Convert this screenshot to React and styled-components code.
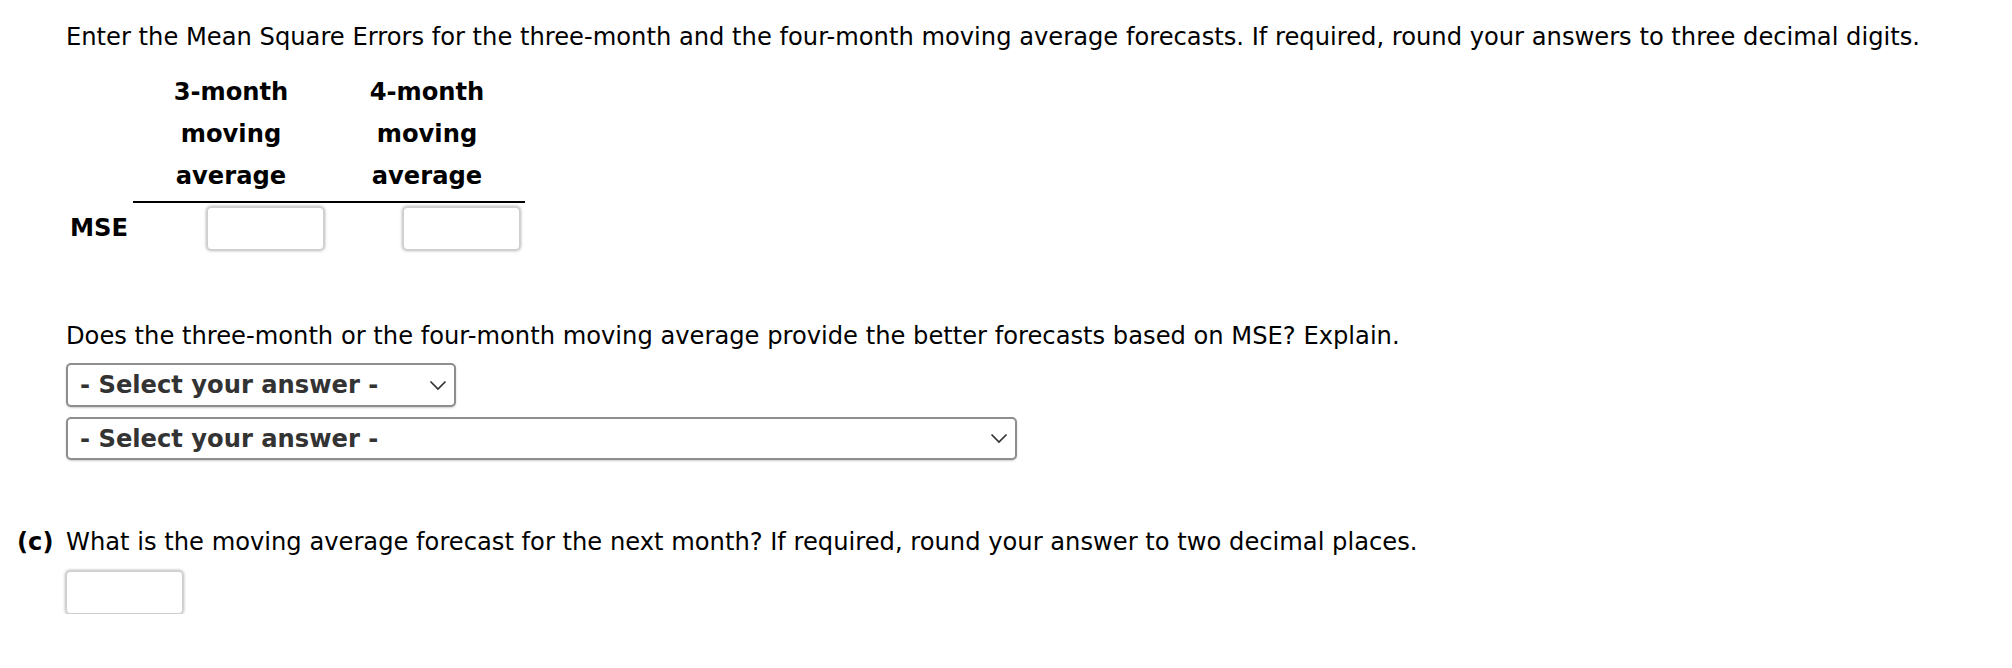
import React from 'react';
import styled, { createGlobalStyle } from 'styled-components';

const GlobalStyle = createGlobalStyle`
    body {
        margin: 0;
        background: #fff;
        color: #000;
        font-family: "DejaVu Sans", Verdana, sans-serif;
        font-size: 24.2px;
        line-height: 42px;
    }
`

const Page = styled.div`
    padding-top: 16px;
    width: 2012px;
`

const Part = styled.div`
    display: grid;
    grid-template-columns: 66px 1fr;
    margin-top: ${props => props.top || 0}px;
`

const PartLabel = styled.span`
    font-weight: bold;
    padding-left: 17px;
`

const Content = styled.div`
    display: flex;
    flex-direction: column;
    align-items: flex-start;
`

const Text = styled.p`
    margin: 0;
`

const Table = styled.table`
    border-collapse: collapse;
    table-layout: fixed;
    width: 459px;
    margin: 13px 0 0 66px;
`

const HeadCell = styled.th`
    width: 196px;
    padding: 0 0 4px;
    text-align: center;
    font-weight: bold;
    border-bottom: 2px solid #000;
    vertical-align: bottom;
`

const EmptyHead = styled.th`
    width: 67px;
    padding: 0;
`

const RowLabel = styled.th`
    text-align: left;
    padding: 4px 0 6px 4px;
    font-weight: bold;
`

const Cell = styled.td`
    padding: 4px 0 6px ${props => props.indent}px;
`

const NumberInput = styled.input`
    display: block;
    box-sizing: border-box;
    width: 117px;
    height: 43px;
    border: 1px solid #cfcfcf;
    border-radius: 4px;
    box-shadow: 0 0 3px 1px rgba(0, 0, 0, 0.28);
    background: #fff;
    margin: ${props => props.top || 0}px 0 0;
`

const SelectBox = styled.div`
    box-sizing: border-box;
    width: ${props => props.width}px;
    height: ${props => props.height}px;
    margin-top: ${props => props.top}px;
    border: 2px solid #8e8e8e;
    border-radius: 5px;
    box-shadow: 0 1px 2px rgba(0, 0, 0, 0.2);
    display: flex;
    align-items: center;
    justify-content: space-between;
    padding: 0 7px 0 12px;
    font-weight: bold;
    color: #333;
    background: #fff;
`

const Chevron = () => (
    <svg width="18" height="11" viewBox="0 0 18 11">
        <path d="M1.5 1.5 L9 9 L16.5 1.5" fill="none" stroke="#333" strokeWidth="1.7" />
    </svg>
)

const Select = ({width, height, top}) => (
    <SelectBox width={width} height={height} top={top}>
        <span>- Select your answer -</span>
        <Chevron/>
    </SelectBox>
)

const App = () => {
    return (
        <Page>
            <GlobalStyle/>
            <Part>
                <span/>
                <Content>
                    <Text>Enter the Mean Square Errors for the three-month and the four-month moving average forecasts. If required, round your answers to three decimal digits.</Text>
                </Content>
            </Part>
            <Table>
                <thead>
                    <tr>
                        <EmptyHead/>
                        <HeadCell>3-month<br/>moving<br/>average</HeadCell>
                        <HeadCell>4-month<br/>moving<br/>average</HeadCell>
                    </tr>
                </thead>
                <tbody>
                    <tr>
                        <RowLabel>MSE</RowLabel>
                        <Cell indent={74}><NumberInput type="text"/></Cell>
                        <Cell indent={74}><NumberInput type="text"/></Cell>
                    </tr>
                </tbody>
            </Table>

            <Part top={59}>
                <span/>
                <Content>
                    <Text>Does the three-month or the four-month moving average provide the better forecasts based on MSE? Explain.</Text>
                    <Select width={390} height={44} top={6}/>
                    <Select width={951} height={43} top={10}/>
                </Content>
            </Part>

            <Part top={61}>
                <PartLabel>(c)</PartLabel>
                <Content>
                    <Text>What is the moving average forecast for the next month? If required, round your answer to two decimal places.</Text>
                    <NumberInput type="text" top={8}/>
                </Content>
            </Part>
        </Page>
    );
}

export default App;
